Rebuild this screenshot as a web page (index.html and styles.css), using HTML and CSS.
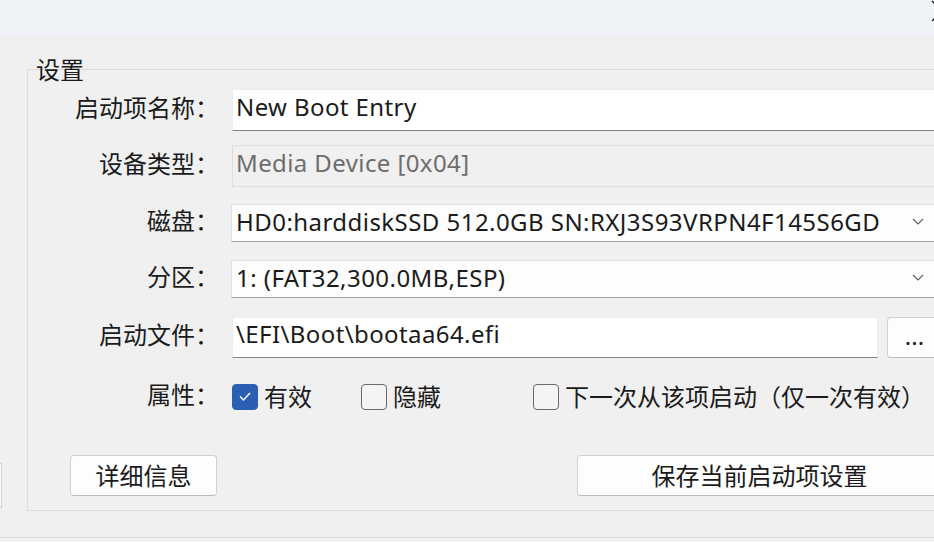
FILE: index.html
```html
<!DOCTYPE html>
<html lang="zh-CN">
<head>
	<meta charset="UTF-8">
	<title>启动项设置</title>
	<link rel="stylesheet" href="styles.css">
</head>
<body>
<div class="win">
	<div class="title">
		<svg class="close" width="12" height="22" viewBox="0 0 12 22"><path d="M1 1 L11 11 M1 21 L11 11" stroke="#1b1b1b" stroke-width="1.3" fill="none"/></svg>
	</div>
	<div class="main">
		<div class="stub"></div>
		<div class="group">
			<span class="legend">设置</span>
			<div class="row r1">
				<span class="lbl">启动项名称：</span>
				<div class="edit">New Boot Entry</div>
			</div>
			<div class="row r2">
				<span class="lbl">设备类型：</span>
				<div class="edit off">Media Device [0x04]</div>
			</div>
			<div class="row r3">
				<span class="lbl">磁盘：</span>
				<div class="combo">
					<span>HD0:harddiskSSD 512.0GB SN:RXJ3S93VRPN4F145S6GD</span>
					<svg class="arr" width="12" height="7" viewBox="0 0 12 7"><polyline points="1,1 6,6 11,1" stroke="#5c5c5c" stroke-width="1.1" fill="none"/></svg>
				</div>
			</div>
			<div class="row r4">
				<span class="lbl">分区：</span>
				<div class="combo">
					<span>1: (FAT32,300.0MB,ESP)</span>
					<svg class="arr" width="12" height="7" viewBox="0 0 12 7"><polyline points="1,1 6,6 11,1" stroke="#5c5c5c" stroke-width="1.1" fill="none"/></svg>
				</div>
			</div>
			<div class="row r5">
				<span class="lbl">启动文件：</span>
				<div class="edit">\EFI\Boot\bootaa64.efi</div>
				<a href="#" class="btn browse">...</a>
			</div>
			<div class="row r6">
				<span class="lbl">属性：</span>
				<label class="opt o1"><span class="box on"><svg width="14" height="11" viewBox="0 0 14 11"><polyline points="2,5.5 5.5,9 12,2" stroke="#fff" stroke-width="1.4" fill="none"/></svg></span>有效</label>
				<label class="opt o2"><span class="box"></span>隐藏</label>
				<label class="opt"><span class="box"></span>下一次从该项启动（仅一次有效）</label>
			</div>
			<div class="acts">
				<a href="#" class="btn more">详细信息</a>
				<a href="#" class="btn save">保存当前启动项设置</a>
			</div>
		</div>
	</div>
	<div class="foot"></div>
</div>
</body>
</html>
```

FILE: styles.css
```css
body{margin:0;background:#f0f0f0;font-family:"Noto Sans","Noto Sans CJK SC",sans-serif;font-size:24px;color:#1b1b1b;overflow:hidden;}
a{text-decoration:none;color:inherit;}
.win{width:960px;height:542px;}
.title{height:35px;background:#eff3f8;position:relative;overflow:hidden;}
.title .close{position:absolute;left:931px;top:0;}
.main{display:flex;align-items:flex-start;padding-top:34px;}
.stub{flex:none;width:1px;height:43px;margin-top:394px;margin-right:25px;background:#fafafa;border:1px solid #d2d2d2;border-left:none;}
.group{position:relative;flex:1;border:1px solid #dcdcdc;border-right:none;padding:19px 18px 14px 0;}
.legend{position:absolute;left:8px;top:-12px;line-height:24px;}
.row{display:flex;align-items:center;}
.lbl{flex:none;width:191px;margin-right:13px;text-align:right;line-height:28px;margin-top:-5px;}
.r2{margin-top:14px;}
.r3{margin-top:17px;}
.r4{margin-top:18px;}
.r5{margin-top:19px;}
.r6{margin-top:26px;height:25px;}
.r6 .lbl{margin-top:-3px;}
.edit{flex:1;height:42px;box-sizing:border-box;background:#fff;border:1px solid #ededed;border-bottom-color:#858585;padding:0 0 8px 3px;display:flex;align-items:center;white-space:nowrap;letter-spacing:0.4px;}
.edit.off{background:#f0f0f0;border-color:#dedede;color:#6d6d6d;}
.r5 .edit{height:41px;}
.combo{flex:1;height:38px;box-sizing:border-box;margin-left:-1px;background:#fdfdfd;border:1px solid #e2e2e2;border-bottom-color:#a6a6a6;padding:0 17px 3px 4px;display:flex;align-items:center;white-space:nowrap;letter-spacing:0.45px;}
.combo .arr{margin-left:auto;}
.btn{display:flex;align-items:center;justify-content:center;box-sizing:border-box;background:#fdfdfd;border:1px solid #d0d0d0;border-bottom-color:#bcbcbc;border-radius:4px;}
.browse{flex:none;width:55px;height:41px;margin-left:9px;padding-bottom:4px;}
.opt{display:flex;align-items:center;line-height:28px;}
.o1{width:129px;}
.o2{width:172px;}
.box{flex:none;box-sizing:border-box;width:26px;height:26px;margin-right:6px;border:1.5px solid #6c6c6c;border-radius:4px;background:#f4f4f4;display:flex;align-items:center;justify-content:center;}
.box.on{background:#2b5fb4;border-color:#2b5fb4;}
.acts{display:flex;justify-content:space-between;margin-top:46px;padding-left:42px;}
.acts .btn{height:41px;padding-bottom:3px;}
.more{width:147px;}
.save{width:365px;}
.foot{margin-top:26px;border-top:1px solid #d9d9d9;}
```
